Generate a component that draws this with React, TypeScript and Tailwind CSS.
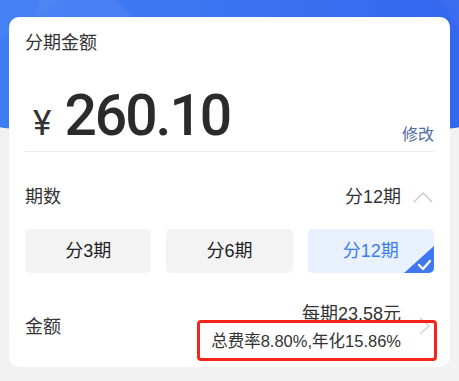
import React from 'react';

const periods = [
  {label: '分3期', active: false},
  {label: '分6期', active: false},
  {label: '分12期', active: true},
];

export default function App() {
  return (
    <div
      className="relative w-[459px] h-[381px] overflow-hidden bg-[#f2f2f2] text-[#333]"
      style={{fontFamily: '"Liberation Sans", "Noto Sans CJK SC", sans-serif'}}
    >
      {/* blue header backdrop */}
      <div className="absolute left-0 top-0 w-full h-[132px] overflow-hidden rounded-b-[50%_5px] bg-gradient-to-r from-[#3f7df4] via-[#3b74f2] to-[#3467ef]">
        <svg className="absolute inset-0" width="459" height="132" viewBox="0 0 459 132">
          <polygon points="40,0 116,0 135,20 20,60" fill="#ffffff" fillOpacity="0.06" />
          <polygon points="0,0 60,0 0,40" fill="#ffffff" fillOpacity="0.03" />
          <polygon points="440,0 459,0 459,30" fill="#ffffff" fillOpacity="0.04" />
        </svg>
      </div>

      <div className="relative mx-[9px] mt-[17px] h-[350px] rounded-[10px] bg-white px-4">
        <div className="pt-[14px] text-[18px] leading-6">分期金额</div>

        <div className="mt-[35px] flex h-[62px] items-end justify-between border-b border-[#ececec] pb-[7px]">
          <div className="flex items-baseline">
            <span className="ml-2 text-[35px] leading-none" style={{fontFamily: 'Roboto, sans-serif'}}>
              ¥
            </span>
            <span
              className="ml-[13px] text-[57px] font-medium leading-none tracking-[-2px] text-[#2b2b2b]"
              style={{fontFamily: 'Roboto, sans-serif'}}
            >
              260.10
            </span>
          </div>
          <span className="mb-[1px] text-[16px] leading-none text-[#4e6ca3]">修改</span>
        </div>

        <div className="mt-[33px] flex h-6 items-center justify-between text-[18px]">
          <span>期数</span>
          <div className="flex items-center">
            <span>分12期</span>
            <svg className="ml-[12px] mr-[1px]" width="20" height="12" viewBox="0 0 20 12">
              <polyline points="1,11 10,2 19,11" fill="none" stroke="#c8c8c8" strokeWidth="1.4" />
            </svg>
          </div>
        </div>

        <div className="mt-5 grid grid-cols-3 gap-[15px]">
          {periods.map((p) => (
            <div
              key={p.label}
              className={
                p.active
                  ? 'relative flex h-[44px] items-center justify-center overflow-hidden rounded-[5px] bg-[#e9f1fe] text-[18px] text-[#3b7cf0]'
                  : 'relative flex h-[44px] items-center justify-center overflow-hidden rounded-[5px] bg-[#f3f3f3] text-[18px] text-[#222]'
              }
            >
              {p.label}
              {p.active && (
                <svg className="absolute right-0 bottom-0" width="30" height="27" viewBox="0 0 30 27">
                  <polygon points="0,27 30,0 30,27" fill="#3f78f0" />
                  <polyline points="15,19 19,23 26,15" fill="none" stroke="#ffffff" strokeWidth="2.4" strokeLinecap="round" strokeLinejoin="round" />
                </svg>
              )}
            </div>
          ))}
        </div>

        <div className="mt-[30px] flex items-center justify-between">
          <span className="text-[18px]">金额</span>
          <div className="flex items-center">
            <div className="flex flex-col items-end">
              <span className="text-[18px] leading-[22px]">每期23.58元</span>
              <span className="mt-[6px] text-[16.5px] leading-5">总费率8.80%,年化15.86%</span>
            </div>
            <svg className="ml-[17px] mr-[3px] mb-[2px]" width="13" height="18" viewBox="0 0 13 18">
              <polyline points="2,1 11,9 2,17" fill="none" stroke="#d0d0d0" strokeWidth="1.3" />
            </svg>
          </div>
        </div>

        <div className="absolute left-[188px] top-[303px] h-[41px] w-[240px] rounded-[4px] border-[3.5px] border-[#f5241b]" />
      </div>
    </div>
  );
}
